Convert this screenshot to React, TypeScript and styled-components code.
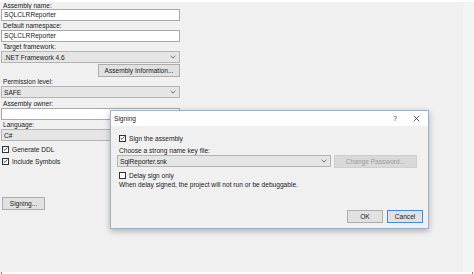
import React from "react";
import styled, { createGlobalStyle } from "styled-components";

const GlobalStyle = createGlobalStyle`
  html, body {
    margin: 0;
    padding: 0;
    background: #ffffff;
  }
  body {
    font-family: "Liberation Sans", Arial, sans-serif;
    font-size: 6.6px;
    color: #1a1a1a;
  }
`;

const Check = ({ checked }: { checked?: boolean }) => (
    <CheckBox>
        {checked && (
            <svg width="6" height="6" viewBox="0 0 6 6">
                <path d="M0.8 3.1 L2.4 4.6 L5.2 1.2" fill="none" stroke="#222" strokeWidth="0.9" />
            </svg>
        )}
    </CheckBox>
);

const Chevron = () => (
    <svg width="6" height="4" viewBox="0 0 6 4">
        <path d="M0.6 0.8 L3 3.1 L5.4 0.8" fill="none" stroke="#555" strokeWidth="0.8" />
    </svg>
);

const CloseIcon = () => (
    <svg width="7" height="7" viewBox="0 0 7 7">
        <path d="M0.7 0.7 L6.3 6.3 M6.3 0.7 L0.7 6.3" fill="none" stroke="#333" strokeWidth="0.8" />
    </svg>
);

const App: React.FC = () => {
    return (
        <Screen>
            <GlobalStyle />
            <Workspace>
                <Form>
                    <Label $h={7}>Assembly name:</Label>
                    <TextBox>SQLCLRReporter</TextBox>
                    <Label>Default namespace:</Label>
                    <TextBox>SQLCLRReporter</TextBox>
                    <Label>Target framework:</Label>
                    <Select>
                        <span>.NET Framework 4.6</span>
                        <Chevron />
                    </Select>
                    <ButtonRow>
                        <Button $w={82}>Assembly Information...</Button>
                    </ButtonRow>
                    <Label>Permission level:</Label>
                    <Select>
                        <span>SAFE</span>
                        <Chevron />
                    </Select>
                    <Label $gap={1}>Assembly owner:</Label>
                    <TextBox />
                    <Label>Language:</Label>
                    <Select>
                        <span>C#</span>
                        <Chevron />
                    </Select>
                    <CheckRow $gap={2}>
                        <Check checked />
                        <span>Generate DDL</span>
                    </CheckRow>
                    <CheckRow>
                        <Check checked />
                        <span>Include Symbols</span>
                    </CheckRow>
                    <SigningRow>
                        <Button $w={43}>Signing...</Button>
                    </SigningRow>
                </Form>
                <SideStrip />
            </Workspace>

            <Dialog>
                <TitleBar>
                    <span>Signing</span>
                    <TitleActions>
                        <span>?</span>
                        <CloseIcon />
                    </TitleActions>
                </TitleBar>
                <DialogBody>
                    <CheckRow $indent={2}>
                        <Check checked />
                        <span>Sign the assembly</span>
                    </CheckRow>
                    <Label $gap={3} $h={8}>
                        Choose a strong name key file:
                    </Label>
                    <KeyRow>
                        <Select $w={214}>
                            <span>SqlReporter.snk</span>
                            <Chevron />
                        </Select>
                        <Button $w={83} $disabled>
                            Change Password...
                        </Button>
                    </KeyRow>
                    <CheckRow $gap={1} $indent={2}>
                        <Check />
                        <span>Delay sign only</span>
                    </CheckRow>
                    <Label $h={8}>When delay signed, the project will not run or be debuggable.</Label>
                    <DialogButtons>
                        <Button $w={36}>OK</Button>
                        <Button $w={36} $primary>
                            Cancel
                        </Button>
                    </DialogButtons>
                </DialogBody>
            </Dialog>
            <Marker $left={1} />
            <Marker $left={472} />
        </Screen>
    );
};

export default App;

const Screen = styled.div`
    position: relative;
    width: 474px;
    height: 274px;
    overflow: hidden;
    background: #ffffff;
`;

const Workspace = styled.div`
    margin-top: 2px;
    height: 270px;
    display: flex;
    background: #f0f0f0;
`;

const SideStrip = styled.div`
    margin-left: auto;
    width: 11px;
    background: #f4f4f4;
`;

const Form = styled.div`
    width: 179px;
    margin-left: 1px;
    display: flex;
    flex-direction: column;
`;

const Label = styled.div<{ $h?: number; $gap?: number }>`
    height: ${(p) => p.$h ?? 9}px;
    line-height: ${(p) => p.$h ?? 9}px;
    margin-top: ${(p) => p.$gap ?? 0}px;
    padding-left: 2px;
    white-space: nowrap;
`;

const TextBox = styled.div`
    box-sizing: border-box;
    height: 12px;
    line-height: 10px;
    padding-left: 2px;
    background: #ffffff;
    border: 1px solid #a9a9a9;
    white-space: nowrap;
`;

const Select = styled.div<{ $w?: number }>`
    box-sizing: border-box;
    width: ${(p) => (p.$w ? `${p.$w}px` : "auto")};
    height: 12px;
    padding: 0 3px 0 2px;
    display: flex;
    align-items: center;
    justify-content: space-between;
    background: #e5e5e5;
    border: 1px solid #b4b4b4;
    white-space: nowrap;
`;

const ButtonRow = styled.div`
    display: flex;
    justify-content: flex-end;
    margin-top: 1px;
`;

const Button = styled.div<{ $w: number; $disabled?: boolean; $primary?: boolean }>`
    box-sizing: border-box;
    width: ${(p) => p.$w}px;
    height: 13px;
    display: flex;
    align-items: center;
    justify-content: center;
    background: ${(p) => (p.$disabled ? "#d9d9d9" : "#e1e1e1")};
    border: 1px solid ${(p) => (p.$primary ? "#3c8fd6" : p.$disabled ? "#cfcfcf" : "#adadad")};
    box-shadow: ${(p) => (p.$primary ? "inset 0 0 0 1px #e1e1e1" : "none")};
    color: ${(p) => (p.$disabled ? "#9a9a9a" : "#1a1a1a")};
    white-space: nowrap;
`;

const CheckRow = styled.div<{ $gap?: number; $indent?: number }>`
    height: 12px;
    margin-top: ${(p) => p.$gap ?? 0}px;
    padding-left: ${(p) => p.$indent ?? 1}px;
    display: flex;
    align-items: center;
    gap: 3px;
    white-space: nowrap;
`;

const CheckBox = styled.span`
    box-sizing: border-box;
    width: 7px;
    height: 7px;
    display: inline-flex;
    align-items: center;
    justify-content: center;
    background: #ffffff;
    border: 1px solid #333;
`;

const SigningRow = styled.div`
    margin-top: 30px;
    padding-left: 1px;
`;

const Dialog = styled.div`
    position: absolute;
    left: 110px;
    top: 110px;
    box-sizing: border-box;
    width: 319px;
    height: 119px;
    display: flex;
    flex-direction: column;
    background: #f0f0f0;
    border: 1px solid #9bb2c8;
    box-shadow: 0 2px 6px rgba(0, 0, 0, 0.28);
`;

const TitleBar = styled.div`
    height: 15px;
    padding: 0 8px 0 3px;
    display: flex;
    align-items: center;
    justify-content: space-between;
    background: #ffffff;
`;

const TitleActions = styled.div`
    display: flex;
    align-items: center;
    gap: 16px;
    color: #333;
`;

const DialogBody = styled.div`
    flex: 1;
    padding: 6px 5px 5px 6px;
    display: flex;
    flex-direction: column;
`;

const KeyRow = styled.div`
    display: flex;
    gap: 3px;
`;

const DialogButtons = styled.div`
    margin-top: auto;
    display: flex;
    justify-content: flex-end;
    gap: 4px;
`;

const Marker = styled.div<{ $left: number }>`
    position: absolute;
    left: ${(p) => p.$left}px;
    bottom: 0;
    width: 1px;
    height: 2px;
    background: #c0606a;
`;
